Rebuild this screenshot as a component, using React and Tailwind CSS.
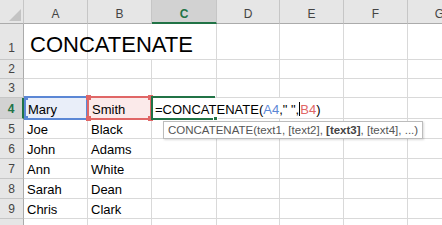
import React from "react";

const FONT = { fontFamily: '"Liberation Sans", Arial, sans-serif' };

const data = [
  ["Joe", "Black"],
  ["John", "Adams"],
  ["Ann", "White"],
  ["Sarah", "Dean"],
  ["Chris", "Clark"],
];

function Hdr({ children, sel }) {
  return sel ? (
    <div className="bg-[#d2d2d2] border-r border-[#c6c6c6] border-b-2 border-b-[#217346] flex items-end justify-center pb-[1px] text-[12px] leading-[14px] font-bold text-[#217346]">
      {children}
    </div>
  ) : (
    <div className="bg-[#e6e6e6] border-r border-b border-r-[#c6c6c6] border-b-[#ababab] flex items-end justify-center pb-[2px] text-[12px] leading-[14px] text-[#444]">
      {children}
    </div>
  );
}

function RowHdr({ children, sel, tall }) {
  if (sel)
    return (
      <div className="bg-[#d2d2d2] border-b border-b-[#c6c6c6] border-r-2 border-r-[#217346] flex items-end justify-center pb-[2px] text-[12px] leading-[14px] font-bold text-[#217346]">
        {children}
      </div>
    );
  return (
    <div
      className={
        "bg-[#e6e6e6] border-b border-r border-b-[#c6c6c6] border-r-[#ababab] flex items-end justify-center text-[12px] leading-[14px] text-[#444] " +
        (tall ? "pb-[4px]" : "pb-[2px]")
      }
    >
      {children}
    </div>
  );
}

function Cell({ children }) {
  return (
    <div className="border-r border-b border-[#d9d9d9] flex items-end pl-[3px] pb-[1px] text-[13px] leading-[15px] text-black whitespace-nowrap overflow-visible">
      {children}
    </div>
  );
}

function Empty() {
  return <div className="border-r border-b border-[#d9d9d9]" />;
}

export default function App() {
  return (
    <div className="relative w-[442px] h-[225px] overflow-hidden bg-white" style={FONT}>
      <div className="grid grid-cols-[24px_64px_64px_65px_63px_64px_64px_64px] grid-rows-[24px_36px_19px_19px_21px_20px_20px_20px_20px_20px_20px]">
        {/* header row */}
        <div className="bg-[#e6e6e6] border-r border-b border-r-[#c6c6c6] border-b-[#ababab] relative">
          <svg className="absolute left-[9px] top-[9px]" width="13" height="13" viewBox="0 0 13 13">
            <polygon points="12,0 12,12 0,12" fill="#c3c3c3" />
          </svg>
        </div>
        <Hdr>A</Hdr>
        <Hdr>B</Hdr>
        <Hdr sel>C</Hdr>
        <Hdr>D</Hdr>
        <Hdr>E</Hdr>
        <Hdr>F</Hdr>
        <Hdr>G</Hdr>

        {/* row 1 */}
        <RowHdr tall>1</RowHdr>
        <div className="border-r border-b border-[#d9d9d9] flex items-end pl-[6px] pb-[1px] text-[22px] leading-[26px] text-black whitespace-nowrap overflow-visible">
          CONCATENATE
        </div>
        <div className="border-b border-[#d9d9d9]" />
        <Empty />
        <Empty />
        <Empty />
        <Empty />
        <Empty />

        {/* row 2 */}
        <RowHdr>2</RowHdr>
        <Empty /><Empty /><Empty /><Empty /><Empty /><Empty /><Empty />

        {/* row 3 */}
        <RowHdr>3</RowHdr>
        <Empty /><Empty /><Empty /><Empty /><Empty /><Empty /><Empty />

        {/* row 4 */}
        <RowHdr sel>4</RowHdr>
        <div className="relative border-r border-b border-[#d9d9d9] bg-[#e9eef9] flex items-end pl-[4px] pb-[1px] text-[13px] leading-[15px] text-black">
          Mary
          <div className="absolute left-0 top-[-2px] right-[-1px] bottom-[-2px] border-2 border-[#5b87d5]">
            <div className="absolute left-[-2px] top-[-2px] w-[4px] h-[4px] bg-[#5b87d5]" />
            <div className="absolute left-[-2px] bottom-[-2px] w-[4px] h-[4px] bg-[#5b87d5]" />
          </div>
        </div>
        <div className="relative border-r border-b border-[#d9d9d9] bg-[#fbeaea] flex items-end pl-[4px] pb-[1px] text-[13px] leading-[15px] text-black">
          Smith
          <div className="absolute left-[-1px] top-[-2px] right-[-1px] bottom-[-2px] border-2 border-[#e06666]">
            <div className="absolute left-[-3px] top-[-3px] w-[5px] h-[5px] bg-[#e06666]" />
            <div className="absolute left-[-3px] bottom-[-3px] w-[5px] h-[5px] bg-[#e06666]" />
            <div className="absolute right-[-3px] top-[-3px] w-[5px] h-[5px] bg-[#e06666]" />
            <div className="absolute right-[-3px] bottom-[-3px] w-[5px] h-[5px] bg-[#e06666]" />
          </div>
        </div>
        <div className="relative col-span-3 border-r border-b border-[#d9d9d9] flex items-end pl-[3px] pb-[1px] text-[13px] leading-[15px] text-black whitespace-nowrap">
          <div className="absolute left-[-1px] top-[-2px] w-[64px] bottom-[-2px] border-t-2 border-l-2 border-b-2 border-[#217346]">
            <div className="absolute right-[-3px] bottom-[-3px] w-[5px] h-[5px] bg-[#217346] border border-white" />
          </div>
          <span className="relative">
            =CONCATENATE(<span className="text-[#5b87d5]">A4</span>," ",
            <span className="inline-block w-px h-[14px] bg-black align-[-2px]" />
            <span className="text-[#e06666]">B4</span>)
          </span>
        </div>
        <Empty />
        <Empty />

        {/* rows 5-9 */}
        {data.map(([a, b], i) => (
          <React.Fragment key={i}>
            <RowHdr>{i + 5}</RowHdr>
            <Cell>{a}</Cell>
            <Cell>{b}</Cell>
            <Empty /><Empty /><Empty /><Empty /><Empty />
          </React.Fragment>
        ))}

        {/* row 10 */}
        <RowHdr />
        <Empty /><Empty /><Empty /><Empty /><Empty /><Empty /><Empty />
      </div>

      {/* tooltip */}
      <div className="absolute left-[163px] top-[121px] h-[18px] px-[4px] border border-[#bcbcbc] bg-white shadow-[1px_1px_2px_rgba(0,0,0,0.15)] flex items-center text-[11.5px] leading-[14px] text-[#555] whitespace-pre">
        CONCATENATE(text1, [text2], <b className="font-bold text-[#444]">[text3]</b>, [text4], ...)
      </div>
    </div>
  );
}
